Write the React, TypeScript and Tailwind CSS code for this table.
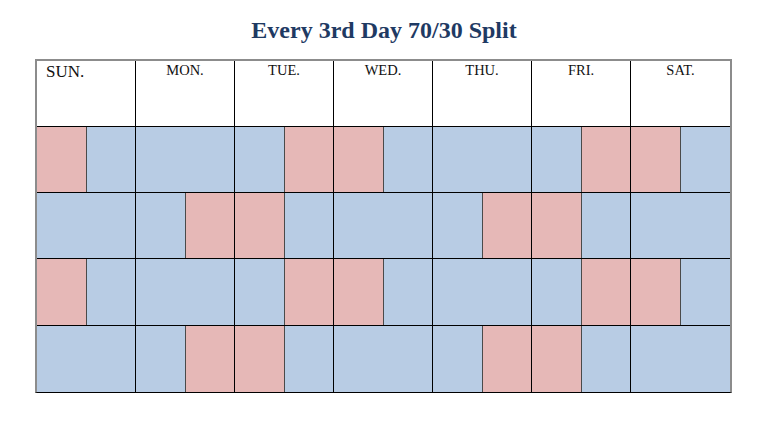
const days = ["SUN.", "MON.", "TUE.", "WED.", "THU.", "FRI.", "SAT."];

// P = pink (30), B = blue (70); two halves per day
const rowA = ["PB", "BB", "BP", "PB", "BB", "BP", "PB"];
const rowB = ["BB", "BP", "PB", "BB", "BP", "PB", "BB"];
const rows = [rowA, rowB, rowA, rowB];
const rowHeights = ["h-[66px]", "h-[66px]", "h-[67px]", "h-[66px]"];

function Half({ c, right }: { c: string; right?: boolean }) {
  return (
    <div
      className={`flex-1 ${c === "P" ? "bg-[#e6b8b7]" : "bg-[#b8cce4]"} ${
        right ? "border-l border-[#4a4a4a]" : ""
      }`}
    />
  );
}

function DayCell({ pair, last }: { pair: string; last: boolean }) {
  const merged = pair === "BB";
  return (
    <div className={`flex ${last ? "" : "border-r border-black"}`}>
      {merged ? (
        <Half c="B" />
      ) : (
        <>
          <Half c={pair[0]} />
          <Half c={pair[1]} right />
        </>
      )}
    </div>
  );
}

export default function App() {
  return (
    <div
      className="w-[768px] h-[432px] bg-white overflow-hidden"
      style={{ fontFamily: '"Liberation Serif", "Times New Roman", serif' }}
    >
      <h1 className="pt-[16px] h-[59px] text-center text-[24px] leading-[28px] font-bold text-[#1f3a63]">
        Every 3rd Day 70/30 Split
      </h1>

      <div className="ml-[35px] w-[697px] border-2 border-b border-[#8c8c8c] border-b-black">
        {/* header */}
        <div className="grid grid-cols-7 h-[66px] border-b border-black">
          {days.map((d, i) => (
            <div
              key={d}
              className={`${i < 6 ? "border-r border-black" : ""} ${
                i === 0
                  ? "pl-[9px] pt-[1px] text-[17px] leading-[20px]"
                  : "pt-[1px] text-center text-[14.5px] leading-[16px]"
              } text-[#111]`}
            >
              {d}
            </div>
          ))}
        </div>

        {rows.map((r, ri) => (
          <div
            key={ri}
            className={`grid grid-cols-7 ${rowHeights[ri]} ${
              ri < 3 ? "border-b border-black" : ""
            }`}
          >
            {r.map((pair, di) => (
              <DayCell key={di} pair={pair} last={di === 6} />
            ))}
          </div>
        ))}
      </div>
    </div>
  );
}
